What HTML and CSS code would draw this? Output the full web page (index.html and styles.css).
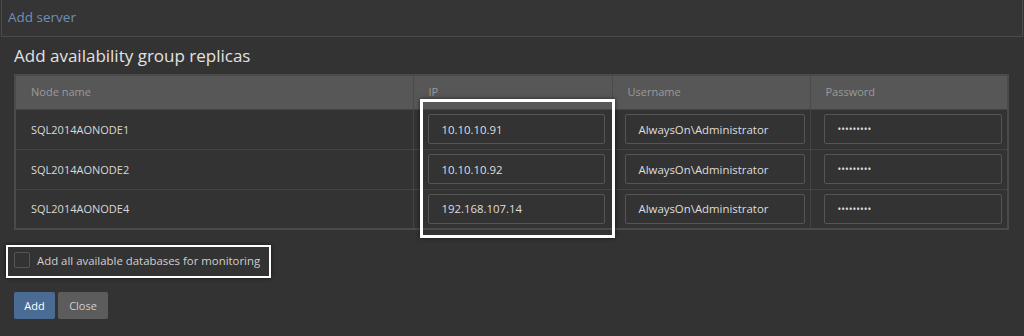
FILE: index.html
```html
<!DOCTYPE html>
<html>
<head>
<meta charset="utf-8">
<link rel="stylesheet" href="styles.css">
</head>
<body>
<div class="topbar"><span class="topbar-title">Add server</span></div>
<div class="content">
  <h2 class="title">Add availability group replicas</h2>
  <div class="table-wrap">
    <table class="replicas">
      <thead>
        <tr><th class="c-node">Node name</th><th class="c-ip">IP</th><th class="c-user">Username</th><th class="c-pass">Password</th></tr>
      </thead>
      <tbody>
        <tr><td class="node">SQL2014AONODE1</td><td class="ipcell"><div class="inp">10.10.10.91</div></td><td class="usercell"><div class="inp">AlwaysOn\Administrator</div></td><td class="passcell"><div class="inp pw">•••••••••</div></td></tr>
        <tr><td class="node">SQL2014AONODE2</td><td class="ipcell"><div class="inp">10.10.10.92</div></td><td class="usercell"><div class="inp">AlwaysOn\Administrator</div></td><td class="passcell"><div class="inp pw">•••••••••</div></td></tr>
        <tr><td class="node">SQL2014AONODE4</td><td class="ipcell"><div class="inp">192.168.107.14</div></td><td class="usercell"><div class="inp">AlwaysOn\Administrator</div></td><td class="passcell"><div class="inp pw">•••••••••</div></td></tr>
      </tbody>
    </table>
    <div class="hl-ip"></div>
  </div>
  <div class="check-row">
    <span class="checkbox"></span><span class="check-label">Add all available databases for monitoring</span>
    <div class="hl-check"></div>
  </div>
  <div class="buttons">
    <button class="btn btn-primary">Add</button><button class="btn btn-default">Close</button>
  </div>
</div>
</body>
</html>
```
FILE: styles.css
```css
html, body {
  margin: 0;
  padding: 0;
  background: #333333;
  font-family: "Open Sans", "Noto Sans", sans-serif;
  color: #d6d6d6;
  width: 1024px;
  height: 336px;
  overflow: hidden;
}
.topbar {
  height: 36px;
  margin: -1px 1px 0 1px;
  border: 1px solid #4a4a4a;
  background: #353535;
  display: flex;
  align-items: center;
  padding-left: 6px;
  box-sizing: content-box;
}
.topbar-title {
  color: #6f8fb8;
  font-size: 13.5px;
  margin-top: -3px;
}
.content {
  padding: 0 15px 0 14px;
}
.title {
  margin: 7px 0 0 0;
  font-size: 17px;
  font-weight: 400;
  color: #e2e2e2;
  line-height: 24px;
  height: 30px;
}
.table-wrap {
  position: relative;
  width: 995px;
}
.replicas {
  width: 995px;
  border-collapse: collapse;
  table-layout: fixed;
  border: 2px solid #4a4a4a;
  font-size: 11px;
}
.replicas th {
  background: #575757;
  color: #9a9a9a;
  font-weight: 400;
  text-align: left;
  height: 34px;
  padding: 0 0 2px 15px;
  border-left: 1px solid #4a4a4a;
  border-bottom: 1px solid #444;
  box-sizing: border-box;
  vertical-align: middle;
}
.replicas th:first-child { border-left: none; }
.c-node { width: 398px; }
.c-ip { width: 199px; }
.c-user { width: 198px; }
.c-pass { width: 198px; }
.replicas td {
  height: 40px;
  border-left: 1px solid #444;
  border-top: 1px solid #444;
  padding: 0;
  box-sizing: border-box;
  vertical-align: middle;
}
.replicas td:first-child { border-left: none; }
.replicas td.node {
  padding-left: 15px;
  color: #d8d8d8;
}
.replicas td.ipcell { padding: 0 7px 0 14px; }
.replicas td.usercell { padding: 0 5px 0 12px; }
.replicas td.passcell { padding: 0 5px 0 13px; }
.inp {
  height: 30px;
  border: 1px solid #555;
  border-radius: 2px;
  background: #333;
  box-sizing: border-box;
  display: flex;
  align-items: center;
  padding-left: 13px;
  color: #dedede;
  font-size: 11.4px;
}
.inp.pw {
  font-size: 10px;
  letter-spacing: 0;
  padding-left: 13px;
}
.hl-ip {
  position: absolute;
  left: 406px;
  top: 25px;
  width: 195px;
  height: 139px;
  border: 3px solid #ffffff;
  box-sizing: border-box;
  box-shadow: 0 0 4px rgba(0,0,0,0.6);
  pointer-events: none;
}
.check-row {
  position: relative;
  margin-top: 22px;
  height: 16px;
  display: flex;
  align-items: center;
}
.checkbox {
  width: 16px;
  height: 16px;
  border: 1px solid #555;
  box-sizing: border-box;
  border-radius: 2px;
  margin-right: 7px;
}
.check-label {
  font-size: 11.4px;
  color: #d0d0d0;
}
.hl-check {
  position: absolute;
  left: -8px;
  top: -7px;
  width: 265px;
  height: 33px;
  border: 2px solid #ffffff;
  box-sizing: border-box;
  box-shadow: 0 0 4px rgba(0,0,0,0.6);
}
.buttons {
  margin-top: 24px;
  display: flex;
  gap: 3px;
}
.btn {
  height: 27px;
  border: none;
  border-radius: 2px;
  font-family: "Open Sans", "Noto Sans", sans-serif;
  font-size: 11px;
  padding: 0;
}
.btn-primary {
  width: 41px;
  background: #4a6c94;
  color: #ffffff;
}
.btn-default {
  width: 50px;
  background: #5c5c5c;
  color: #cfcfcf;
}
```
